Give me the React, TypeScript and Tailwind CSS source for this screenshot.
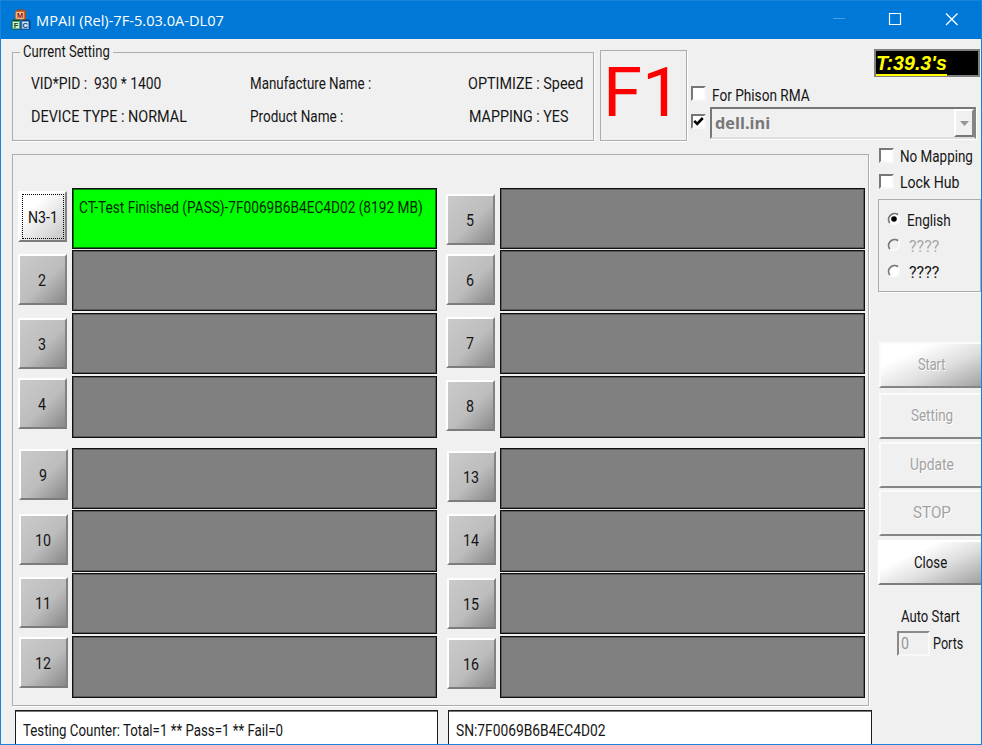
import { useLayoutEffect, useRef, useState } from "react";

type FitProps = { text: string; width: number; className?: string };

/* Condenses a single line of text to the given width. */
function Fit({ text, width, className = "" }: FitProps) {
  const ref = useRef<HTMLSpanElement>(null);
  const [scale, setScale] = useState(1);
  useLayoutEffect(() => {
    if (ref.current) setScale(width / ref.current.offsetWidth);
  }, [width, text]);
  return (
    <span className={`block h-4 shrink-0 leading-4 ${className}`} style={{ width }}>
      <span ref={ref} className="inline-block origin-left whitespace-pre" style={{ transform: `scaleX(${scale})` }}>
        {text}
      </span>
    </span>
  );
}

type Port = { label: string; gap: string; tw: number };

const leftPorts: Port[] = [
  { label: "N3-1", gap: "mt-[3px]", tw: 30 },
  { label: "2", gap: "mt-[12px]", tw: 8 },
  { label: "3", gap: "mt-[13px]", tw: 8 },
  { label: "4", gap: "mt-[9px]", tw: 8 },
  { label: "9", gap: "mt-[20px] ml-px", tw: 8 },
  { label: "10", gap: "mt-[14px] ml-px", tw: 16 },
  { label: "11", gap: "mt-[12px] ml-px", tw: 16 },
  { label: "12", gap: "mt-[9px] ml-px", tw: 16 },
];

const rightPorts: Port[] = [
  { label: "5", gap: "mt-[6px]", tw: 8 },
  { label: "6", gap: "mt-[9px]", tw: 8 },
  { label: "7", gap: "mt-[12px]", tw: 8 },
  { label: "8", gap: "mt-[12px]", tw: 8 },
  { label: "13", gap: "mt-[20px] ml-px", tw: 16 },
  { label: "14", gap: "mt-[12px] ml-px", tw: 16 },
  { label: "15", gap: "mt-[13px] ml-px", tw: 16 },
  { label: "16", gap: "mt-[9px] ml-px", tw: 16 },
];

const slotBoxes = [
  "h-[61px]",
  "mt-px h-[61px]",
  "mt-[2px] h-[61px]",
  "mt-[2px] h-[62px]",
  "mt-[10px] h-[61px]",
  "mt-px h-[62px]",
  "mt-px h-[61px]",
  "mt-[2px] h-[62px]",
];

function PortButtons({ ports }: { ports: Port[] }) {
  return (
    <div className="flex w-[50px] flex-col">
      {ports.map((p) => {
        const active = p.label === "N3-1";
        return (
          <button
            key={p.label}
            className={`flex h-[51px] w-[49px] shrink-0 items-center justify-center border-2 border-t-white border-r-[#828282] border-b-[#7c7c7c] border-l-white ${p.gap} ${
              active
                ? "bg-linear-135 from-white from-30% to-[#c4c4c4]"
                : "bg-linear-135 from-[#cacaca] via-[#bdbdbd] via-55% to-[#888888]"
            }`}
          >
            <span
              className={
                active
                  ? "flex h-[45px] w-[42px] items-center justify-center border border-dotted border-black pt-[3px]"
                  : "flex items-center justify-center pt-[2px] pr-px"
              }
            >
              <Fit text={p.label} width={p.tw} className="text-left" />
            </span>
          </button>
        );
      })}
    </div>
  );
}

function Slots({ first }: { first?: string }) {
  return (
    <div className="flex w-[365px] flex-col">
      {slotBoxes.map((box, i) => (
        <div
          key={i}
          className={`shrink-0 border border-[#101010] ${box} ${
            first && i === 0
              ? "bg-[#00ff00] shadow-[inset_0_0_0_1px_#007a00]"
              : "bg-[#808080] shadow-[inset_0_0_0_1px_#5a5a5a]"
          }`}
        >
          {first && i === 0 && <Fit text={first} width={344} className="mt-[11px] ml-[6px] text-[#002800]" />}
        </div>
      ))}
    </div>
  );
}

function Check({ checked = false }: { checked?: boolean }) {
  return (
    <span className="block h-[15px] w-[15px] shrink-0 border-2 border-t-[#777777] border-r-[#f8f8f8] border-b-[#f8f8f8] border-l-[#777777] bg-white">
      {checked && (
        <svg viewBox="0 0 11 11" className="block h-[11px] w-[11px]" fill="none" stroke="#000" strokeWidth="2.6">
          <path d="M1.2 4.8 4.2 7.8 9.8 2" />
        </svg>
      )}
    </span>
  );
}

function Radio({ checked = false, disabled = false }: { checked?: boolean; disabled?: boolean }) {
  return (
    <svg viewBox="0 0 14 14" className="mt-[2px] h-[14px] w-[14px] shrink-0" fill="none">
      <circle cx="7" cy="7" r="6" fill={disabled ? "#f0f0f0" : "#fff"} />
      <path d="M2.8 11.2A6 6 0 0 1 11.2 2.8" stroke="#777" strokeWidth="1.8" />
      <path d="M11.2 2.8A6 6 0 0 1 2.8 11.2" stroke="#fafafa" strokeWidth="1.5" />
      {checked && <circle cx="7" cy="7" r="2.8" fill="#000" />}
    </svg>
  );
}

const actions = [
  { label: "Start", box: "h-[46px] pl-[37px] bg-linear-155 from-white from-25% via-[#dedede] via-60% to-[#a0a0a0]", tw: 27 },
  { label: "Setting", box: "mt-[5px] h-[46px] pl-[30px]", tw: 42 },
  { label: "Update", box: "mt-[3px] h-[46px] pl-[29px]", tw: 44 },
  { label: "STOP", box: "mt-[2px] h-[46px] pl-[32px]", tw: 38 },
];

function BlocksIcon() {
  return (
    <svg viewBox="0 0 20 21" className="h-[21px] w-[20px]">
      <path d="M4.500 2.500 6.500.5h6.500l2 1.500v8.500H4.500z" fill="#a84a1c" />
      <path d="M4.500 2.500h9V10.500h-9z" fill="#f08a48" />
      <path d="M5.500 3.200h7V9.500h-7z" fill="#ffd5ad" />
      <path d="M.5 12 2 10.500h7.500V20.500H.5z" fill="#164d31" />
      <path d="M1 12h8v8H1z" fill="#4fa675" />
      <path d="M2 13h6v6.200H2z" fill="#d3efd8" />
      <path d="M10 12l1.500-1.500H18l1.500 2v8h-9.500z" fill="#163d70" />
      <path d="M10.500 12h7.500v8h-7.500z" fill="#609fdc" />
      <path d="M11.500 13h5.500v6.200h-5.500z" fill="#cce5ff" />
      <g fontFamily="Liberation Sans, sans-serif" fontWeight="700" fontSize="7.500" textAnchor="middle">
        <text x="9" y="9.100" fill="#8b1010">M</text>
        <text x="5" y="18.800" fill="#104422">F</text>
        <text x="14.300" y="18.800" fill="#103a7c">C</text>
      </g>
    </svg>
  );
}

export default function App() {
  return (
    <div className="flex h-[745px] w-[982px] flex-col overflow-hidden border border-[#1883d7] bg-[#f0f0f0] font-['Roboto','Liberation_Sans',sans-serif] text-[16px] text-[#151515]">
      <header className="flex h-[38px] shrink-0 items-start bg-[#0078d7] text-white">
        <div className="mt-[8px] ml-[10px]">
          <BlocksIcon />
        </div>
        <Fit
          text="MPAII (Rel)-7F-5.03.0A-DL07"
          width={188}
          className="mt-[11px] ml-[5px] font-['Open_Sans','Noto_Sans',sans-serif] text-[15px]"
        />
        <svg viewBox="0 0 126 14" className="mt-[11px] ml-[608px] h-[14px] w-[126px] shrink-0" fill="none" stroke="#fff">
          <path d="M1 6.500h12" stroke="#4a9fe2" />
          <path d="M57.500 1.500h11v11h-11z" strokeWidth="1.200" />
          <path d="M114 1.500l11.500 11.500M125.500 1.500 114 13" strokeWidth="1.300" />
        </svg>
      </header>

      <div className="flex h-[103px] shrink-0">
        <fieldset className="mt-[5px] ml-[11px] h-[97px] w-[582px] shrink-0 border border-[#acacac] px-0 shadow-[1px_1px_0_#fff]">
          <legend className="ml-[7px] px-[3px]">
            <Fit text="Current Setting" width={87} />
          </legend>
          <div className="mt-[16px] flex pl-[18px]">
            <Fit text="VID*PID :  930 * 1400" width={130} />
            <Fit text="Manufacture Name :" width={121} className="ml-[89px]" />
            <Fit text="OPTIMIZE : Speed" width={115} className="ml-[97px]" />
          </div>
          <div className="mt-[17px] flex pl-[18px]">
            <Fit text="DEVICE TYPE : NORMAL" width={156} />
            <Fit text="Product Name :" width={93} className="ml-[63px]" />
            <Fit text="MAPPING : YES" width={99} className="ml-[126px]" />
          </div>
        </fieldset>

        <div className="mt-[11px] ml-[6px] flex h-[91px] w-[87px] shrink-0 items-start border border-[#acacac] shadow-[1px_1px_0_#fff]">
          <Fit text="F1" width={79} className="mt-[34px] ml-[2px] text-[68px] text-[#ff0000]" />
        </div>

        <div className="ml-[4px] flex w-[290px] flex-col">
          <div className="mt-[10px] ml-[183px] flex h-[28px] w-[106px] items-start border-2 border-[#808080] bg-black">
            <div className="mt-[2px] flex h-[23px] border-b-2 border-[#ffff00]">
              <Fit
                text="T:39.3's"
                width={71}
                className="mt-[2px] font-['Liberation_Sans',Arial,sans-serif] text-[21px] font-bold text-[#ffff00] italic"
              />
            </div>
          </div>
          <div className="mt-[9px] flex">
            <Check />
            <Fit text="For Phison RMA" width={98} className="mt-[2px] ml-[6px]" />
          </div>
          <div className="mt-[3px] flex">
            <div className="mt-[7px]">
              <Check checked />
            </div>
            <div className="ml-[4px] flex h-[32px] w-[266px] items-start border-2 border-t-[#777777] border-r-[#858585] border-b-[#dedede] border-l-[#777777] shadow-[1px_1px_0_#fff]">
              <Fit
                text="dell.ini"
                width={55}
                className="mt-[6px] ml-[3px] font-['Open_Sans','Noto_Sans',sans-serif] text-[16px] font-bold text-[#777777]"
              />
              <span className="ml-auto flex h-[28px] w-[20px] items-center justify-center border-2 border-t-white border-r-[#858585] border-b-[#777777] border-l-white bg-[#f0f0f0]">
                <svg viewBox="0 0 9 5" className="h-[5px] w-[9px]">
                  <path d="M0 0h9L4.500 5z" fill="#969696" />
                </svg>
              </span>
            </div>
          </div>
        </div>
      </div>

      <div className="flex flex-1">
        <div className="flex w-[871px] shrink-0 flex-col">
          <main className="mt-[12px] ml-[11px] flex h-[552px] w-[857px] shrink-0 border border-[#acacac] pt-[33px] pl-[5px] shadow-[1px_1px_0_#fff]">
            <PortButtons ports={leftPorts} />
            <div className="ml-[4px]">
              <Slots first="CT-Test Finished (PASS)-7F0069B6B4EC4D02 (8192 MB)" />
            </div>
            <div className="ml-[9px]">
              <PortButtons ports={rightPorts} />
            </div>
            <div className="ml-[4px]">
              <Slots />
            </div>
          </main>
          <footer className="mt-[4px] ml-[14px] flex flex-1 gap-[10px]">
            <div className="w-[423px] border border-b-0 border-[#1c1c1c] bg-white pt-[12px] pl-[7px] shadow-[inset_0_1px_0_#777]">
              <Fit text="Testing Counter: Total=1 ** Pass=1 ** Fail=0" width={260} />
            </div>
            <div className="w-[424px] border border-b-0 border-[#1c1c1c] bg-white pt-[12px] pl-[7px] shadow-[inset_0_1px_0_#777]">
              <Fit text="SN:7F0069B6B4EC4D02" width={150} />
            </div>
          </footer>
        </div>

        <aside className="flex flex-1 flex-col pl-[6px]">
          <div className="mt-[6px] ml-px flex">
            <Check />
            <Fit text="No Mapping" width={73} className="mt-px ml-[6px]" />
          </div>
          <div className="mt-[9px] ml-px flex">
            <Check />
            <Fit text="Lock Hub" width={59} className="mt-px ml-[6px]" />
          </div>
          <div className="mt-[8px] flex h-[93px] w-[103px] flex-col border border-[#acacac] pt-[10px] pl-[8px] shadow-[1px_1px_0_#fff]">
            <div className="flex h-[26px]">
              <Radio checked />
              <Fit text="English" width={44} className="mt-[3px] ml-[6px]" />
            </div>
            <div className="flex h-[26px]">
              <Radio disabled />
              <Fit text="????" width={30} className="mt-[3px] ml-[8px] text-[#a8a8a8]" />
            </div>
            <div className="flex h-[26px]">
              <Radio />
              <Fit text="????" width={30} className="mt-[3px] ml-[8px]" />
            </div>
          </div>
          <div className="mt-[50px] ml-px flex flex-col">
            {actions.map((a) => (
              <button
                key={a.label}
                disabled
                className={`flex shrink-0 items-center border-2 border-r-0 border-t-[#fbfbfb] border-b-[#858585] border-l-[#fbfbfb] text-left text-[#a2a2a2] [text-shadow:1px_1px_0_#fff] ${a.box}`}
              >
                <Fit text={a.label} width={a.tw} />
              </button>
            ))}
          </div>
          <button className="mt-[4px] flex h-[45px] w-[105px] shrink-0 items-center border-2 border-r-0 border-t-white border-b-[#7c7c7c] border-l-white bg-linear-155 from-white from-30% via-[#dedede] via-60% to-[#a0a0a0] pl-[34px] text-left">
            <Fit text="Close" width={33} />
          </button>
          <Fit text="Auto Start" width={59} className="mt-[24px] ml-[23px]" />
          <div className="mt-[6px] ml-[19px] flex">
            <div className="h-[25px] w-[33px] border-2 border-t-[#8a8a8a] border-r-[#f8f8f8] border-b-[#f8f8f8] border-l-[#8a8a8a] pt-[3px] pl-[2px]">
              <Fit text="0" width={8} className="text-[#969696]" />
            </div>
            <Fit text="Ports" width={30} className="mt-[5px] ml-[3px]" />
          </div>
        </aside>
      </div>
    </div>
  );
}
